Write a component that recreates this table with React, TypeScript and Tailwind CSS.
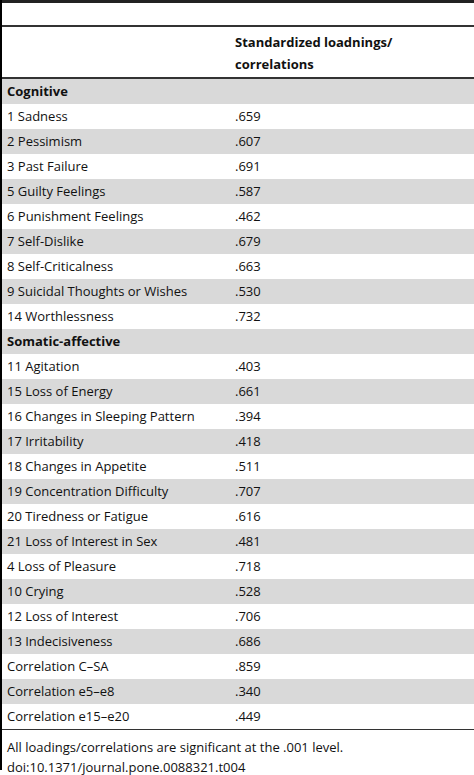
const rows: { label: string; value?: string; bold?: boolean }[] = [
  { label: "Cognitive", bold: true },
  { label: "1 Sadness", value: ".659" },
  { label: "2 Pessimism", value: ".607" },
  { label: "3 Past Failure", value: ".691" },
  { label: "5 Guilty Feelings", value: ".587" },
  { label: "6 Punishment Feelings", value: ".462" },
  { label: "7 Self-Dislike", value: ".679" },
  { label: "8 Self-Criticalness", value: ".663" },
  { label: "9 Suicidal Thoughts or Wishes", value: ".530" },
  { label: "14 Worthlessness", value: ".732" },
  { label: "Somatic-affective", bold: true },
  { label: "11 Agitation", value: ".403" },
  { label: "15 Loss of Energy", value: ".661" },
  { label: "16 Changes in Sleeping Pattern", value: ".394" },
  { label: "17 Irritability", value: ".418" },
  { label: "18 Changes in Appetite", value: ".511" },
  { label: "19 Concentration Difficulty", value: ".707" },
  { label: "20 Tiredness or Fatigue", value: ".616" },
  { label: "21 Loss of Interest in Sex", value: ".481" },
  { label: "4 Loss of Pleasure", value: ".718" },
  { label: "10 Crying", value: ".528" },
  { label: "12 Loss of Interest", value: ".706" },
  { label: "13 Indecisiveness", value: ".686" },
  { label: "Correlation C–SA", value: ".859" },
  { label: "Correlation e5–e8", value: ".340" },
  { label: "Correlation e15–e20", value: ".449" },
];

export default function App() {
  return (
    <div className="w-[474px] h-[775px] bg-white text-[13px] text-[#111]" style={{ fontFamily: '"Open Sans", sans-serif' }}>
      <div className="h-[770px] border-l-2 border-black">
        <div className="h-[3px] bg-[#222]" />
        <div className="h-[22px]" />
        <div className="h-[2px] bg-[#333]" />
        <div className="flex h-[50px]">
          <div className="w-[233px]" />
          <div className="pt-[4px] font-bold leading-[22px]">
            Standardized loadnings/
            <br />
            correlations
          </div>
        </div>
        <div className="h-[2px] bg-[#333]" />
        {rows.map((r, i) => (
          <div key={i} className={`flex h-[25px] items-center ${i % 2 === 0 ? "bg-[#d9d9d9]" : "bg-white"}`}>
            <div className={`w-[233px] pl-[5px] ${r.bold ? "font-bold" : ""}`}>{r.label}</div>
            <div>{r.value}</div>
          </div>
        ))}
        <div className="h-[1px] bg-[#333]" />
        <div className="pl-[5px] pt-[7px] leading-[20px]">
          All loadings/correlations are significant at the .001 level.
          <br />
          doi:10.1371/journal.pone.0088321.t004
        </div>
      </div>
    </div>
  );
}
